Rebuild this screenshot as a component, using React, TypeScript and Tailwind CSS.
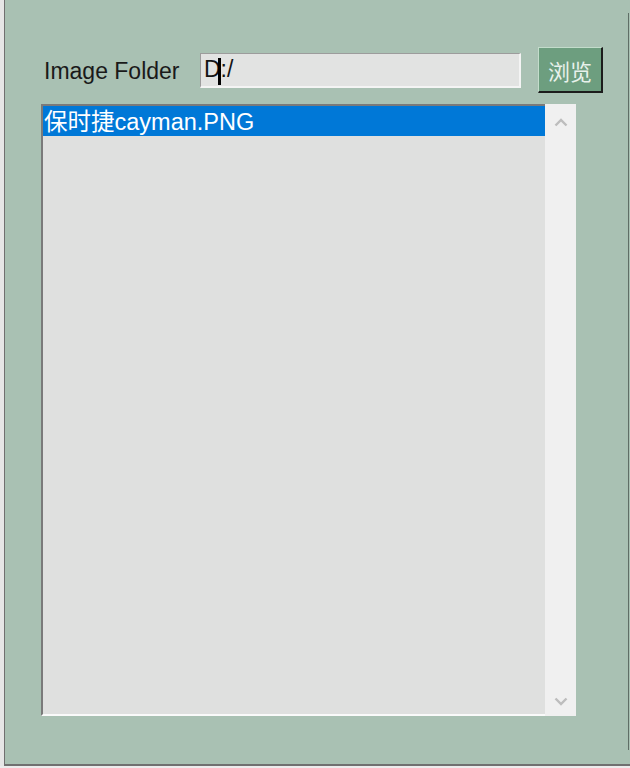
import React from "react";

const latin = { fontFamily: '"Liberation Sans", "Noto Sans CJK SC", Arial, sans-serif' };
const cjk = { fontFamily: '"Noto Sans CJK SC", "Liberation Sans", sans-serif' };

export default function App() {
  return (
    <div className="w-[630px] h-[768px] bg-[#e6e6e6] overflow-hidden flex flex-col">
      <div className="flex h-[766px] pl-[4px]">
        <div className="relative flex-1 flex flex-col bg-[#a9c1b3] border-l border-b-2 border-[#707070]">
          <div className="absolute right-[1px] top-[13px] bottom-[14px] w-px bg-[#5f6e66]" />
          {/* top row */}
          <div className="flex items-center h-[46px] mt-[47px] pl-[39px]">
            <span className="w-[156px] text-[23px] leading-none text-[#1a1a1a] pt-[2px]" style={latin}>
              Image Folder
            </span>
            <div className="relative w-[321px] h-[35px] bg-[#e2e3e2] border-t border-l border-[#9c9c9c] border-r-2 border-b-2 border-r-[#f4f4f4] border-b-[#f4f4f4] flex items-center pl-[3px]">
              <span className="text-[23px] leading-none text-[#141414]" style={latin}>
                D:/
              </span>
              <span className="absolute left-[17px] top-[4px] w-[3px] h-[27px] bg-black" />
            </div>
            <button
              className="ml-[17px] w-[65px] h-[46px] bg-[#6d9e7f] border-t border-l border-[#c3dccb] border-r-2 border-b-2 border-r-[#1c1c1c] border-b-[#1c1c1c] flex items-center justify-center text-[22px] leading-none text-[#e8f1eb]"
              style={cjk}
            >
              浏览
            </button>
          </div>
          {/* list */}
          <div className="ml-[36px] mt-[11px] w-[535px] h-[612px] flex">
            <div className="flex-1 flex flex-col bg-[#dfe0df] border-l-2 border-t-2 border-[#7a7a7a] border-b-2 border-b-[#fafafa]">
              <div
                className="h-[30px] bg-[#0078d7] text-white text-[23.5px] leading-none flex items-center pl-[1px] pt-[3px]"
                style={latin}
              >
                保时捷cayman.PNG
              </div>
            </div>
            <div className="w-[31px] bg-[#f0f0f0] flex flex-col items-center justify-between pt-[14px] pb-[10px]">
              <svg width="14" height="9" viewBox="0 0 14 9">
                <path d="M1.5 7.5 L7 2 L12.5 7.5" fill="none" stroke="#bdbdbd" strokeWidth="2.4" />
              </svg>
              <svg width="14" height="9" viewBox="0 0 14 9">
                <path d="M1.5 1.5 L7 7 L12.5 1.5" fill="none" stroke="#bdbdbd" strokeWidth="2.4" />
              </svg>
            </div>
          </div>
        </div>
      </div>
      <div className="flex-1 bg-[#ececec]" />
    </div>
  );
}
